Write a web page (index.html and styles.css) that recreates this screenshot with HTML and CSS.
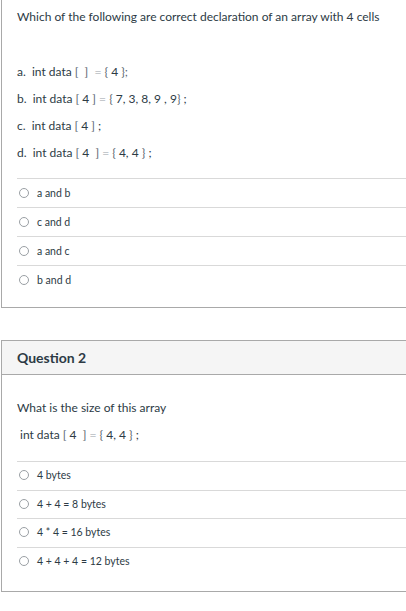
FILE: index.html
```html
<!DOCTYPE html>
<html>
<head>
<meta charset="utf-8">
<link rel="stylesheet" href="styles.css">
</head>
<body>
<div class="card card-first">
  <div class="card-body">
    <p class="qtext">Which of the following are correct declaration of an array with 4 cells</p>
    <div class="code-list">
      <p class="code">a.&nbsp; int data <span class="br">[</span> &nbsp;<span class="br">]</span> &nbsp;<span class="eq">=</span> <span class="br">{</span> 4 <span class="br">};</span></p>
      <p class="code">b.&nbsp; int data <span class="br">[</span> 4 <span class="br">]</span> <span class="eq">=</span> <span class="br">{</span> 7, 3, 8, 9 , 9<span class="br">}</span> ;</p>
      <p class="code">c.&nbsp; int data <span class="br">[</span> 4 <span class="br">]</span> ;</p>
      <p class="code">d.&nbsp; int data <span class="br">[</span> 4 &nbsp;<span class="br">]</span> <span class="eq">=</span> <span class="br">{</span> 4, 4 <span class="br">}</span> ;</p>
    </div>
    <div class="answers">
      <label class="answer"><span class="radio"></span><span>a and b</span></label>
      <label class="answer"><span class="radio"></span><span>c and d</span></label>
      <label class="answer"><span class="radio"></span><span>a and c</span></label>
      <label class="answer"><span class="radio"></span><span>b and d</span></label>
    </div>
  </div>
</div>

<div class="card card-second">
  <div class="card-header">Question 2</div>
  <div class="card-body body2">
    <p class="qtext">What is the size of this array</p>
    <p class="code code2">int data <span class="br">[</span> 4 &nbsp;<span class="br">]</span> <span class="eq">=</span> <span class="br">{</span> 4, 4 <span class="br">}</span> ;</p>
    <div class="answers answers2">
      <label class="answer"><span class="radio"></span><span>4 bytes</span></label>
      <label class="answer"><span class="radio"></span><span>4 + 4 = 8 bytes</span></label>
      <label class="answer"><span class="radio"></span><span>4 * 4 = 16 bytes</span></label>
      <label class="answer"><span class="radio"></span><span>4 + 4 + 4 = 12 bytes</span></label>
    </div>
  </div>
</div>
</body>
</html>
```

FILE: styles.css
```css
* { box-sizing: border-box; }
html, body { margin: 0; padding: 0; background: #fff; }
body {
  font-family: Lato, "Liberation Sans", sans-serif;
  color: #2d3b45;
  padding-left: 1px;
  overflow: hidden;
}
p { margin: 0; }

.card {
  border: 1px solid #a9a9a9;
  border-right: none;
  background: #fff;
}
.card-first {
  border-top: none;
}
.card-body {
  padding: 0 0 0 15px;
}
.card-first .card-body {
  padding-top: 10px;
  padding-bottom: 13px;
}
.qtext {
  font-size: 12px;
  line-height: 14px;
}
.code-list {
  margin-top: 41px;
  display: flex;
  flex-direction: column;
  gap: 13px;
}
.code {
  font-size: 12px;
  line-height: 14px;
}
.br { color: #5a6670; }
.eq { color: #c4c8cc; }

.answers {
  margin-top: 18px;
  display: flex;
  flex-direction: column;
}
.answer {
  display: flex;
  align-items: center;
  height: 29px;
  border-top: 1px solid #d9d9d9;
  font-size: 10.5px;
  padding-left: 2px;
  padding-bottom: 1px;
  gap: 8px;
}
.radio {
  width: 10px;
  height: 10px;
  border: 1px solid #9a9fa4;
  border-radius: 50%;
  flex: none;
}

.card-second {
  margin-top: 32px;
}
.card-header {
  background: #f5f5f5;
  border-bottom: 1px solid #a9a9a9;
  height: 34px;
  padding-left: 15px;
  display: flex;
  align-items: center;
  font-size: 14px;
  font-weight: 700;
  color: #2d3b45;
}
.body2 {
  padding-top: 26px;
  padding-bottom: 16px;
}
.code2 {
  margin-top: 13px;
  padding-left: 3px;
}
.answers2 {
  margin-top: 19px;
}
.answers2 .answer {
  height: 28.5px;
}
```
